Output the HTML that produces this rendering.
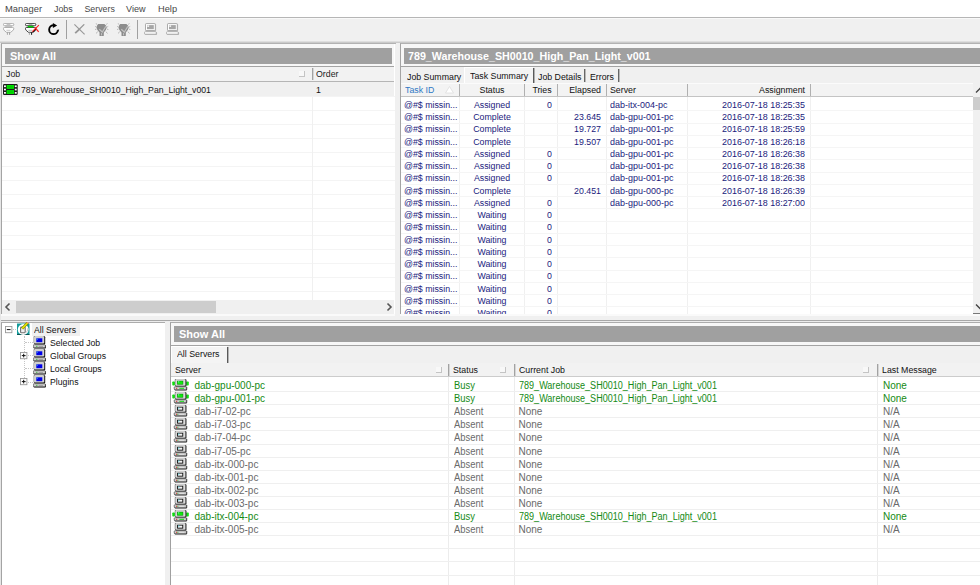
<!DOCTYPE html>
<html><head><meta charset="utf-8"><title>Backburner Queue Monitor</title>
<style>
html,body{margin:0;padding:0;}
body{width:980px;height:585px;overflow:hidden;background:#f0f0f0;font-family:"Liberation Sans",sans-serif;font-size:8.8px;color:#000;position:relative;}
.abs,.abs *{position:absolute;}
div,span{position:absolute;white-space:pre;}
.t{line-height:12px;height:12px;font-size:9.2px;transform:scaleX(0.957);transform-origin:0 0;}
.m{line-height:12px;height:12px;color:#474747;}
.bar{background:#a0a0a0;color:#fff;font-weight:bold;font-size:11px;}
.hl{background:#a3a3a3;height:1px;}
.vl{background:#a3a3a3;width:1px;}
.grid{background:#f0f0f0;}
.navy{color:#1a1a7c;}
.grn{color:#148a14;}
.gry{color:#6a6a6a;}
.seg{font-size:10px;line-height:13px;height:13px;}
</style></head><body>

<div style="left:0;top:0;width:980px;height:17px;background:#fff;"></div>
<div style="left:0;top:17px;width:980px;height:1px;background:#b6b6b6;"></div>
<div class="m" style="left:5px;top:2.8px;font-size:9.4px;">Manager</div>
<div class="m" style="left:54px;top:2.8px;font-size:8.9px;">Jobs</div>
<div class="m" style="left:84.5px;top:2.8px;font-size:8.8px;">Servers</div>
<div class="m" style="left:126px;top:2.8px;font-size:9.1px;">View</div>
<div class="m" style="left:158px;top:2.8px;font-size:9.25px;">Help</div>
<div style="left:0;top:18px;width:980px;height:23px;background:#f0f0f0;border-top:1px solid #f9f9f9;box-sizing:border-box;"></div>
<div style="left:0;top:41px;width:980px;height:1px;background:#dedede;"></div>
<div style="left:0;top:42px;width:980px;height:1px;background:#cacaca;"></div>
<svg style="position:absolute;left:3px;top:23px" width="16" height="13" viewBox="0 0 16 13"><rect x="0.4" y="0.4" width="10.4" height="2.3" rx="1.15" fill="#fff" stroke="#9c9c9c" stroke-width="0.8"/><path d="M3.6 1.55 H7.4" stroke="#bcbcbc" stroke-width="0.9"/><path d="M2.2 3.5 H9" stroke="#bcbcbc" stroke-width="0.9"/><path d="M0.4 5.6 Q0.4 4.5 1.6 4.5 L9.6 4.5 Q10.8 4.5 10.8 5.6 L10.8 6.1 Q10.2 7.6 7.7 9.3 L3.5 9.3 Q1 7.6 0.4 6.1 Z" fill="#fff" stroke="#9c9c9c" stroke-width="0.8"/><path d="M3.4 7.3 H7.4" stroke="#bcbcbc" stroke-width="0.8"/><path d="M4.4 9.3 V11.8" stroke="#9c9c9c" stroke-width="0.9"/><path d="M6.6 9.3 V11.8" stroke="#9c9c9c" stroke-width="1"/></svg>
<svg style="position:absolute;left:25px;top:23px" width="16" height="13" viewBox="0 0 16 13"><rect x="0.4" y="0.4" width="10.4" height="2.3" rx="1.15" fill="#fff" stroke="#111" stroke-width="0.8"/><path d="M3.6 1.55 H7.4" stroke="#aaa" stroke-width="0.9"/><path d="M2.2 3.5 H9" stroke="#aaa" stroke-width="0.9"/><path d="M0.4 5.6 Q0.4 4.5 1.6 4.5 L9.6 4.5 Q10.8 4.5 10.8 5.6 L10.8 6.1 Q10.2 7.6 7.7 9.3 L3.5 9.3 Q1 7.6 0.4 6.1 Z" fill="#fff" stroke="#111" stroke-width="0.8"/><path d="M3.4 7.3 H7.4" stroke="#aaa" stroke-width="0.8"/><path d="M4.4 9.3 V11.8" stroke="#999" stroke-width="0.9"/><path d="M6.6 9.3 V11.8" stroke="#111" stroke-width="1"/><rect x="2.8" y="2.9" width="5.6" height="1.5" fill="#00d800"/><path d="M10.8 5.8 Q10.2 7.6 7.7 9.3" fill="none" stroke="#111" stroke-width="1.2"/><path d="M13.9 2.2 L7.3 8.6" stroke="#ff1a1a" stroke-width="1.1"/><path d="M10 4.6 L13.7 8.8" stroke="#ff1a1a" stroke-width="1.25"/></svg>
<svg style="position:absolute;left:46.5px;top:22.7px" width="13" height="13" viewBox="0 0 13 13"><path d="M6.2 2.3 A4.4 4.4 0 1 0 10.9 7.4" fill="none" stroke="#000" stroke-width="1.9"/><path d="M5.9 0 L10.2 2.6 L5.9 4.9 Z" fill="#000"/><path d="M9.6 7.0 L12.2 6.4 L11.3 8.6 Z" fill="#000"/></svg>
<div style="left:66px;top:20px;width:1px;height:19px;background:#a0a0a0;"></div>
<svg style="position:absolute;left:74px;top:24.2px" width="11" height="11" viewBox="0 0 11 11"><path d="M0.4 0.4 L10.6 10.4" stroke="#979797" stroke-width="1.1"/><path d="M10.3 0.3 L5.5 5" stroke="#979797" stroke-width="1.2"/><path d="M5.8 4.8 L1.2 9.2" stroke="#979797" stroke-width="1.8"/></svg>
<svg style="position:absolute;left:95.2px;top:22.8px" width="14" height="13.5" viewBox="0 0 14 13.5"><path d="M3.2 1.1 L9.4 1.1 Q11.4 2.4 11.8 4.4 Q11.4 6.6 8.8 9.5 L8.8 12.6 Q8.8 13.1 8.2 13.1 L5.1 13.1 Q4.5 13.1 4.5 12.6 L4.5 9.5 Q1.8 6.6 1.4 4.4 Q1.8 2.4 3.2 1.1 Z" fill="#8c8c8c"/><path d="M4.3 6.3 L7.3 9 L10.9 3.2" fill="none" stroke="#c2c2c2" stroke-width="1.15"/><path d="M6.6 10.2 V12.4" stroke="#cfcfcf" stroke-width="0.9"/><path d="M0.7 0.2 L2.2 1.6 M12.6 0.2 L11.2 1.5 M0 6.5 L1.4 6.2 M13.4 6.5 L12 6.2 M1 10.4 L2.8 8.7 M12.6 10.4 L10.8 8.7 M13.2 3.4 L12.2 3.9 M0.2 3.4 L1.2 3.9" stroke="#a8a8a8" stroke-width="0.8"/></svg>
<svg style="position:absolute;left:117.1px;top:22.8px" width="14" height="13.5" viewBox="0 0 14 13.5"><path d="M3.2 1.1 L9.4 1.1 Q11.4 2.4 11.8 4.4 Q11.4 6.6 8.8 9.5 L8.8 12.6 Q8.8 13.1 8.2 13.1 L5.1 13.1 Q4.5 13.1 4.5 12.6 L4.5 9.5 Q1.8 6.6 1.4 4.4 Q1.8 2.4 3.2 1.1 Z" fill="#8c8c8c"/><path d="M4.3 6.3 L7.3 9 L10.9 3.2" fill="none" stroke="#c2c2c2" stroke-width="1.15"/><path d="M6.6 10.2 V12.4" stroke="#cfcfcf" stroke-width="0.9"/><path d="M0.7 0.2 L2.2 1.6 M12.6 0.2 L11.2 1.5 M0 6.5 L1.4 6.2 M13.4 6.5 L12 6.2 M1 10.4 L2.8 8.7 M12.6 10.4 L10.8 8.7 M13.2 3.4 L12.2 3.9 M0.2 3.4 L1.2 3.9" stroke="#a8a8a8" stroke-width="0.8"/></svg>
<div style="left:137px;top:20px;width:1px;height:19px;background:#a0a0a0;"></div>
<svg style="position:absolute;left:144.4px;top:22.7px" width="13.5" height="12.5" viewBox="0 0 13.5 12.5"><rect x="1.7" y="0.8" width="10.4" height="7.6" rx="0.8" fill="#b4b4b4"/><rect x="1.5" y="0.6" width="9.8" height="7" rx="0.7" fill="#fff" stroke="#a2a2a2" stroke-width="0.9"/><rect x="3" y="2.1" width="6.8" height="4.1" fill="#a6a6a6"/><rect x="3.3" y="2.4" width="1.8" height="1.4" fill="#fff"/><rect x="0.7" y="8.9" width="12.4" height="3" rx="1" fill="#b4b4b4"/><rect x="0.5" y="8.7" width="11.8" height="2.5" rx="0.9" fill="#fff" stroke="#a2a2a2" stroke-width="0.8"/></svg>
<svg style="position:absolute;left:166.3px;top:22.7px" width="13.5" height="12.5" viewBox="0 0 13.5 12.5"><rect x="1.7" y="0.8" width="10.4" height="7.6" rx="0.8" fill="#b4b4b4"/><rect x="1.5" y="0.6" width="9.8" height="7" rx="0.7" fill="#fff" stroke="#a2a2a2" stroke-width="0.9"/><rect x="3" y="2.1" width="6.8" height="4.1" fill="#a6a6a6"/><rect x="3.3" y="2.4" width="1.8" height="1.4" fill="#fff"/><rect x="0.7" y="8.9" width="12.4" height="3" rx="1" fill="#b4b4b4"/><rect x="0.5" y="8.7" width="11.8" height="2.5" rx="0.9" fill="#fff" stroke="#a2a2a2" stroke-width="0.8"/></svg>
<div style="left:1px;top:43px;width:395px;height:273px;background:#fff;border-left:1px solid #a4a4a4;border-top:1px solid #b2b2b2;box-sizing:border-box;"></div>
<div style="left:2px;top:44px;width:392px;height:22px;background:#f7f7f7;"></div>
<div class="bar" style="left:5px;top:48px;width:387px;height:16px;"></div>
<div style="left:10px;top:48.6px;font-size:11px;font-weight:bold;color:#fff;line-height:14px;">Show All</div>
<div class="hl" style="left:2px;top:66px;width:392px;"></div>
<div style="left:2px;top:67px;width:392px;height:14px;background:#f2f2f2;"></div>
<div class="hl" style="left:2px;top:81px;width:392px;background:#b5b5b5;"></div>
<div class="t" style="left:6px;top:68px;color:#222;">Job</div>
<div class="t" style="left:316.4px;top:68px;color:#222;">Order</div>
<div class="vl" style="left:312px;top:68px;height:12px;background:#a2a2a2;"></div><div class="vl" style="left:313px;top:68px;height:12px;background:#d6d6d6;"></div>
<div style="left:299px;top:71px;width:5px;height:5px;background:#f8f8f8;border-right:1px solid #c4c4c4;border-bottom:1px solid #c4c4c4;"></div>
<div style="left:2px;top:82px;width:392px;height:15px;background:#f0f0f0;"></div>
<div style="left:2px;top:96.3px;width:393px;height:1px;background:#f4f4f4;"></div>
<div style="left:2px;top:110.2px;width:393px;height:1px;background:#f4f4f4;"></div>
<div style="left:2px;top:124.1px;width:393px;height:1px;background:#f4f4f4;"></div>
<div style="left:2px;top:138.0px;width:393px;height:1px;background:#f4f4f4;"></div>
<div style="left:2px;top:151.9px;width:393px;height:1px;background:#f4f4f4;"></div>
<div style="left:2px;top:165.8px;width:393px;height:1px;background:#f4f4f4;"></div>
<div style="left:2px;top:179.7px;width:393px;height:1px;background:#f4f4f4;"></div>
<div style="left:2px;top:193.6px;width:393px;height:1px;background:#f4f4f4;"></div>
<div style="left:2px;top:207.5px;width:393px;height:1px;background:#f4f4f4;"></div>
<div style="left:2px;top:221.4px;width:393px;height:1px;background:#f4f4f4;"></div>
<div style="left:2px;top:235.3px;width:393px;height:1px;background:#f4f4f4;"></div>
<div style="left:2px;top:249.2px;width:393px;height:1px;background:#f4f4f4;"></div>
<div style="left:2px;top:263.1px;width:393px;height:1px;background:#f4f4f4;"></div>
<div style="left:2px;top:277.0px;width:393px;height:1px;background:#f4f4f4;"></div>
<div style="left:2px;top:290.9px;width:393px;height:1px;background:#f4f4f4;"></div>
<div style="left:312px;top:97px;width:1px;height:203px;background:#f0f0f0;"></div>
<div class="t" style="left:20.5px;top:83.5px;transform:scaleX(0.945);color:#111;">789_Warehouse_SH0010_High_Pan_Light_v001</div>
<div class="t" style="left:316px;top:83.5px;color:#111;">1</div>
<svg style="position:absolute;left:3.3px;top:83.9px" width="14.7" height="11" viewBox="0 0 14.7 11"><rect x="0" y="0" width="14.7" height="11" rx="1.2" fill="#1c1c1c"/><rect x="3.6" y="1" width="7.4" height="3.9" fill="#00e400"/><rect x="3.6" y="6.1" width="7.4" height="3.9" fill="#00e400"/><rect x="4.8" y="2.3" width="5" height="1.3" fill="#00c400"/><rect x="4.8" y="7.4" width="5" height="1.3" fill="#00c400"/><rect x="1.0" y="1.4" width="1.9" height="1.7" fill="#fff"/><rect x="1.0" y="4.7" width="1.9" height="1.7" fill="#fff"/><rect x="1.0" y="8.0" width="1.9" height="1.7" fill="#fff"/><rect x="11.8" y="1.4" width="1.9" height="1.7" fill="#fff"/><rect x="11.8" y="4.7" width="1.9" height="1.7" fill="#fff"/><rect x="11.8" y="8.0" width="1.9" height="1.7" fill="#fff"/></svg>
<div style="left:2px;top:300px;width:392px;height:14px;background:#f0f0f0;"></div>
<div style="left:16px;top:301px;width:200px;height:12px;background:#cdcdcd;"></div>
<svg style="position:absolute;left:4px;top:302px" width="8" height="10" viewBox="0 0 8 10"><path d="M5.5 1.5 L2 5 L5.5 8.5" fill="none" stroke="#555" stroke-width="1.6"/></svg>
<svg style="position:absolute;left:385px;top:302px" width="8" height="10" viewBox="0 0 8 10"><path d="M2.5 1.5 L6 5 L2.5 8.5" fill="none" stroke="#555" stroke-width="1.6"/></svg>
<div style="left:400px;top:43px;width:590px;height:273px;background:#fff;border-left:1px solid #a4a4a4;border-top:1px solid #b2b2b2;box-sizing:border-box;"></div>
<div style="left:401px;top:44px;width:579px;height:22px;background:#f7f7f7;"></div><div style="left:401px;top:67px;width:579px;height:16px;background:#f0f0f0;"></div>
<div class="bar" style="left:404px;top:48px;width:576px;height:16px;"></div>
<div style="left:408px;top:48.6px;font-size:10.7px;font-weight:bold;color:#fff;line-height:14px;">789_Warehouse_SH0010_High_Pan_Light_v001</div>
<div class="hl" style="left:401px;top:66px;width:579px;"></div>
<div style="left:464px;top:67px;width:69px;height:16px;background:#f4f4f4;border-left:1px solid #fff;border-top:1px solid #fff;box-sizing:border-box;"></div>
<div class="vl" style="left:533px;top:68px;height:15px;background:#5a5a5a;"></div><div class="vl" style="left:534px;top:68px;height:15px;background:#b0b0b0;"></div>
<div class="vl" style="left:584px;top:69px;height:13px;background:#666;"></div><div class="vl" style="left:585px;top:69px;height:13px;background:#b8b8b8;"></div>
<div class="vl" style="left:618px;top:69px;height:13px;background:#666;"></div><div class="vl" style="left:619px;top:69px;height:13px;background:#b8b8b8;"></div>
<div class="t" style="left:407px;top:71px;color:#111;">Job Summary</div>
<div class="t" style="left:470px;top:69.5px;color:#111;">Task Summary</div>
<div class="t" style="left:538px;top:71px;color:#111;">Job Details</div>
<div class="t" style="left:590px;top:71px;color:#111;">Errors</div>
<div style="left:401px;top:83px;width:572px;height:13px;background:#f3f3f3;border-top:1px solid #fbfbfb;box-sizing:border-box;"></div>
<div class="hl" style="left:401px;top:96px;width:572px;background:#c4c4c4;"></div>
<div class="vl" style="left:459px;top:84px;height:12px;background:#b0b0b0;"></div>
<div class="vl" style="left:459px;top:97px;height:217px;background:#f0f0f0;"></div>
<div class="vl" style="left:524px;top:84px;height:12px;background:#b0b0b0;"></div>
<div class="vl" style="left:524px;top:97px;height:217px;background:#f0f0f0;"></div>
<div class="vl" style="left:557px;top:84px;height:12px;background:#b0b0b0;"></div>
<div class="vl" style="left:557px;top:97px;height:217px;background:#f0f0f0;"></div>
<div class="vl" style="left:606px;top:84px;height:12px;background:#b0b0b0;"></div>
<div class="vl" style="left:606px;top:97px;height:217px;background:#f0f0f0;"></div>
<div class="vl" style="left:687px;top:84px;height:12px;background:#b0b0b0;"></div>
<div class="vl" style="left:687px;top:97px;height:217px;background:#f0f0f0;"></div>
<div class="vl" style="left:810px;top:84px;height:12px;background:#b0b0b0;"></div>
<div class="vl" style="left:810px;top:97px;height:217px;background:#f0f0f0;"></div>
<div class="t" style="left:405px;top:84px;color:#2f78c4;">Task ID</div>
<svg style="position:absolute;left:445px;top:86px" width="9" height="8" viewBox="0 0 9 8"><path d="M0.5 7 L4.5 0.5 L8.5 7 Z" fill="#fff" stroke="#ddd" stroke-width="0.8"/></svg>
<div class="t " style="left:441.5px;width:100px;text-align:center;transform-origin:50% 0;top:84px;color:#111;">Status</div>
<div class="t " style="left:491.5px;width:100px;text-align:center;transform-origin:50% 0;top:84px;color:#111;">Tries</div>
<div class="t " style="left:451px;width:150px;text-align:right;transform-origin:100% 0;top:84px;color:#111;">Elapsed</div>
<div class="t" style="left:610px;top:84px;color:#111;">Server</div>
<div class="t " style="left:655px;width:150px;text-align:right;transform-origin:100% 0;top:84px;color:#111;">Assignment</div>
<div style="left:401px;top:110.40px;width:572px;height:1px;background:#f5f5f5;"></div>
<div style="left:401px;top:122.65px;width:572px;height:1px;background:#f5f5f5;"></div>
<div style="left:401px;top:134.90px;width:572px;height:1px;background:#f5f5f5;"></div>
<div style="left:401px;top:147.15px;width:572px;height:1px;background:#f5f5f5;"></div>
<div style="left:401px;top:159.40px;width:572px;height:1px;background:#f5f5f5;"></div>
<div style="left:401px;top:171.65px;width:572px;height:1px;background:#f5f5f5;"></div>
<div style="left:401px;top:183.90px;width:572px;height:1px;background:#f5f5f5;"></div>
<div style="left:401px;top:196.15px;width:572px;height:1px;background:#f5f5f5;"></div>
<div style="left:401px;top:208.40px;width:572px;height:1px;background:#f5f5f5;"></div>
<div style="left:401px;top:220.65px;width:572px;height:1px;background:#f5f5f5;"></div>
<div style="left:401px;top:232.90px;width:572px;height:1px;background:#f5f5f5;"></div>
<div style="left:401px;top:245.15px;width:572px;height:1px;background:#f5f5f5;"></div>
<div style="left:401px;top:257.40px;width:572px;height:1px;background:#f5f5f5;"></div>
<div style="left:401px;top:269.65px;width:572px;height:1px;background:#f5f5f5;"></div>
<div style="left:401px;top:281.90px;width:572px;height:1px;background:#f5f5f5;"></div>
<div style="left:401px;top:294.15px;width:572px;height:1px;background:#f5f5f5;"></div>
<div style="left:401px;top:306.40px;width:572px;height:1px;background:#f5f5f5;"></div>
<div style="left:401px;top:318.65px;width:572px;height:1px;background:#f5f5f5;"></div>
<div class="t navy" style="left:403.5px;top:98.85px;">@#$ missin...</div>
<div class="t navy" style="left:441.5px;width:100px;text-align:center;transform-origin:50% 0;top:98.85px;">Assigned</div>
<div class="t navy" style="left:402px;width:150px;text-align:right;transform-origin:100% 0;top:98.85px;">0</div>
<div class="t navy" style="left:610.3px;top:98.85px;transform:scaleX(0.978);">dab-itx-004-pc</div>
<div class="t navy" style="left:655px;width:150px;text-align:right;transform-origin:100% 0;top:98.85px;transform:scaleX(0.973);">2016-07-18 18:25:35</div>
<div class="t navy" style="left:403.5px;top:111.1px;">@#$ missin...</div>
<div class="t navy" style="left:441.5px;width:100px;text-align:center;transform-origin:50% 0;top:111.1px;">Complete</div>
<div class="t navy" style="left:451px;width:150px;text-align:right;transform-origin:100% 0;top:111.1px;">23.645</div>
<div class="t navy" style="left:610.3px;top:111.1px;transform:scaleX(0.978);">dab-gpu-001-pc</div>
<div class="t navy" style="left:655px;width:150px;text-align:right;transform-origin:100% 0;top:111.1px;transform:scaleX(0.973);">2016-07-18 18:25:35</div>
<div class="t navy" style="left:403.5px;top:123.35px;">@#$ missin...</div>
<div class="t navy" style="left:441.5px;width:100px;text-align:center;transform-origin:50% 0;top:123.35px;">Complete</div>
<div class="t navy" style="left:451px;width:150px;text-align:right;transform-origin:100% 0;top:123.35px;">19.727</div>
<div class="t navy" style="left:610.3px;top:123.35px;transform:scaleX(0.978);">dab-gpu-001-pc</div>
<div class="t navy" style="left:655px;width:150px;text-align:right;transform-origin:100% 0;top:123.35px;transform:scaleX(0.973);">2016-07-18 18:25:59</div>
<div class="t navy" style="left:403.5px;top:135.6px;">@#$ missin...</div>
<div class="t navy" style="left:441.5px;width:100px;text-align:center;transform-origin:50% 0;top:135.6px;">Complete</div>
<div class="t navy" style="left:451px;width:150px;text-align:right;transform-origin:100% 0;top:135.6px;">19.507</div>
<div class="t navy" style="left:610.3px;top:135.6px;transform:scaleX(0.978);">dab-gpu-001-pc</div>
<div class="t navy" style="left:655px;width:150px;text-align:right;transform-origin:100% 0;top:135.6px;transform:scaleX(0.973);">2016-07-18 18:26:18</div>
<div class="t navy" style="left:403.5px;top:147.85px;">@#$ missin...</div>
<div class="t navy" style="left:441.5px;width:100px;text-align:center;transform-origin:50% 0;top:147.85px;">Assigned</div>
<div class="t navy" style="left:402px;width:150px;text-align:right;transform-origin:100% 0;top:147.85px;">0</div>
<div class="t navy" style="left:610.3px;top:147.85px;transform:scaleX(0.978);">dab-gpu-001-pc</div>
<div class="t navy" style="left:655px;width:150px;text-align:right;transform-origin:100% 0;top:147.85px;transform:scaleX(0.973);">2016-07-18 18:26:38</div>
<div class="t navy" style="left:403.5px;top:160.1px;">@#$ missin...</div>
<div class="t navy" style="left:441.5px;width:100px;text-align:center;transform-origin:50% 0;top:160.1px;">Assigned</div>
<div class="t navy" style="left:402px;width:150px;text-align:right;transform-origin:100% 0;top:160.1px;">0</div>
<div class="t navy" style="left:610.3px;top:160.1px;transform:scaleX(0.978);">dab-gpu-001-pc</div>
<div class="t navy" style="left:655px;width:150px;text-align:right;transform-origin:100% 0;top:160.1px;transform:scaleX(0.973);">2016-07-18 18:26:38</div>
<div class="t navy" style="left:403.5px;top:172.35px;">@#$ missin...</div>
<div class="t navy" style="left:441.5px;width:100px;text-align:center;transform-origin:50% 0;top:172.35px;">Assigned</div>
<div class="t navy" style="left:402px;width:150px;text-align:right;transform-origin:100% 0;top:172.35px;">0</div>
<div class="t navy" style="left:610.3px;top:172.35px;transform:scaleX(0.978);">dab-gpu-001-pc</div>
<div class="t navy" style="left:655px;width:150px;text-align:right;transform-origin:100% 0;top:172.35px;transform:scaleX(0.973);">2016-07-18 18:26:38</div>
<div class="t navy" style="left:403.5px;top:184.6px;">@#$ missin...</div>
<div class="t navy" style="left:441.5px;width:100px;text-align:center;transform-origin:50% 0;top:184.6px;">Complete</div>
<div class="t navy" style="left:451px;width:150px;text-align:right;transform-origin:100% 0;top:184.6px;">20.451</div>
<div class="t navy" style="left:610.3px;top:184.6px;transform:scaleX(0.978);">dab-gpu-000-pc</div>
<div class="t navy" style="left:655px;width:150px;text-align:right;transform-origin:100% 0;top:184.6px;transform:scaleX(0.973);">2016-07-18 18:26:39</div>
<div class="t navy" style="left:403.5px;top:196.85px;">@#$ missin...</div>
<div class="t navy" style="left:441.5px;width:100px;text-align:center;transform-origin:50% 0;top:196.85px;">Assigned</div>
<div class="t navy" style="left:402px;width:150px;text-align:right;transform-origin:100% 0;top:196.85px;">0</div>
<div class="t navy" style="left:610.3px;top:196.85px;transform:scaleX(0.978);">dab-gpu-000-pc</div>
<div class="t navy" style="left:655px;width:150px;text-align:right;transform-origin:100% 0;top:196.85px;transform:scaleX(0.973);">2016-07-18 18:27:00</div>
<div class="t navy" style="left:403.5px;top:209.1px;">@#$ missin...</div>
<div class="t navy" style="left:441.5px;width:100px;text-align:center;transform-origin:50% 0;top:209.1px;">Waiting</div>
<div class="t navy" style="left:402px;width:150px;text-align:right;transform-origin:100% 0;top:209.1px;">0</div>
<div class="t navy" style="left:403.5px;top:221.35px;">@#$ missin...</div>
<div class="t navy" style="left:441.5px;width:100px;text-align:center;transform-origin:50% 0;top:221.35px;">Waiting</div>
<div class="t navy" style="left:402px;width:150px;text-align:right;transform-origin:100% 0;top:221.35px;">0</div>
<div class="t navy" style="left:403.5px;top:233.6px;">@#$ missin...</div>
<div class="t navy" style="left:441.5px;width:100px;text-align:center;transform-origin:50% 0;top:233.6px;">Waiting</div>
<div class="t navy" style="left:402px;width:150px;text-align:right;transform-origin:100% 0;top:233.6px;">0</div>
<div class="t navy" style="left:403.5px;top:245.85px;">@#$ missin...</div>
<div class="t navy" style="left:441.5px;width:100px;text-align:center;transform-origin:50% 0;top:245.85px;">Waiting</div>
<div class="t navy" style="left:402px;width:150px;text-align:right;transform-origin:100% 0;top:245.85px;">0</div>
<div class="t navy" style="left:403.5px;top:258.1px;">@#$ missin...</div>
<div class="t navy" style="left:441.5px;width:100px;text-align:center;transform-origin:50% 0;top:258.1px;">Waiting</div>
<div class="t navy" style="left:402px;width:150px;text-align:right;transform-origin:100% 0;top:258.1px;">0</div>
<div class="t navy" style="left:403.5px;top:270.35px;">@#$ missin...</div>
<div class="t navy" style="left:441.5px;width:100px;text-align:center;transform-origin:50% 0;top:270.35px;">Waiting</div>
<div class="t navy" style="left:402px;width:150px;text-align:right;transform-origin:100% 0;top:270.35px;">0</div>
<div class="t navy" style="left:403.5px;top:282.6px;">@#$ missin...</div>
<div class="t navy" style="left:441.5px;width:100px;text-align:center;transform-origin:50% 0;top:282.6px;">Waiting</div>
<div class="t navy" style="left:402px;width:150px;text-align:right;transform-origin:100% 0;top:282.6px;">0</div>
<div class="t navy" style="left:403.5px;top:294.85px;">@#$ missin...</div>
<div class="t navy" style="left:441.5px;width:100px;text-align:center;transform-origin:50% 0;top:294.85px;">Waiting</div>
<div class="t navy" style="left:402px;width:150px;text-align:right;transform-origin:100% 0;top:294.85px;">0</div>
<div class="t navy" style="left:403.5px;top:307.1px;">@#$ missin...</div>
<div class="t navy" style="left:441.5px;width:100px;text-align:center;transform-origin:50% 0;top:307.1px;">Waiting</div>
<div class="t navy" style="left:402px;width:150px;text-align:right;transform-origin:100% 0;top:307.1px;">0</div>
<div style="left:400px;top:314px;width:580px;height:2px;background:#fafafa;"></div>
<div style="left:400px;top:316px;width:580px;height:4px;background:#f0f0f0;"></div>
<div style="left:0px;top:314px;width:395px;height:2px;background:#fafafa;"></div>
<div style="left:0px;top:316px;width:400px;height:4px;background:#f0f0f0;"></div>
<div style="left:395px;top:44px;width:5px;height:276px;background:#f0f0f0;"></div>
<div style="left:0px;top:320px;width:980px;height:1px;background:#a8a8a8;"></div><div style="left:0px;top:321px;width:980px;height:1px;background:#ededed;"></div>
<div style="left:0px;top:44px;width:1px;height:541px;background:#e6e6e6;"></div>
<div style="left:973px;top:83px;width:7px;height:231px;background:#f0f0f0;"></div>
<div style="left:973px;top:97px;width:7px;height:13px;background:#cdcdcd;"></div>
<svg style="position:absolute;left:974.5px;top:86px" width="7" height="8" viewBox="0 0 7 8"><path d="M1 6.5 L5 2.5 L9 6.5" fill="none" stroke="#444" stroke-width="1.4"/></svg>
<svg style="position:absolute;left:974.5px;top:303px" width="7" height="8" viewBox="0 0 7 8"><path d="M1 1.5 L5 5.5 L9 1.5" fill="none" stroke="#444" stroke-width="1.4"/></svg>
<div style="left:973px;top:313px;width:7px;height:1px;background:#777;"></div>
<div style="left:1px;top:322px;width:164px;height:270px;background:#fff;border-left:1px solid #a4a4a4;border-top:1px solid #acacac;box-sizing:border-box;"></div>
<div style="left:32px;top:323px;width:48px;height:13px;background:#f0f0f0;"></div>
<div class="t" style="left:34px;top:323.5px;color:#111;transform:scaleX(0.945);">All Servers</div>
<div class="t" style="left:49.5px;top:336.50px;color:#111;transform:scaleX(0.945);">Selected Job</div>
<div class="t" style="left:49.5px;top:349.57px;color:#111;transform:scaleX(0.945);">Global Groups</div>
<div class="t" style="left:49.5px;top:362.64px;color:#111;transform:scaleX(0.945);">Local Groups</div>
<div class="t" style="left:49.5px;top:375.71px;color:#111;transform:scaleX(0.945);">Plugins</div>
<div style="left:12.5px;top:329px;width:5px;height:0;border-top:1px dotted #c6c6c6;"></div>
<div style="left:23.6px;top:336px;width:0;height:46px;border-left:1px dotted #c6c6c6;"></div>
<div style="left:24.5px;top:342.30px;width:8.5px;height:0;border-top:1px dotted #c6c6c6;"></div>
<div style="left:28px;top:355.37px;width:5px;height:0;border-top:1px dotted #c6c6c6;"></div>
<div style="left:24.5px;top:368.44px;width:8.5px;height:0;border-top:1px dotted #c6c6c6;"></div>
<div style="left:28px;top:381.51px;width:5px;height:0;border-top:1px dotted #c6c6c6;"></div>
<svg style="position:absolute;left:5px;top:326px" width="7.5" height="7.5" viewBox="0 0 7.5 7.5"><rect x="0.5" y="0.5" width="6.4" height="6.2" fill="#fff" stroke="#999" stroke-width="0.9"/><path d="M1.8 3.6 H5.6" stroke="#111" stroke-width="1"/></svg>
<svg style="position:absolute;left:20.2px;top:352.1px" width="7.5" height="7.5" viewBox="0 0 7.5 7.5"><rect x="0.5" y="0.5" width="6.4" height="6.2" fill="#fff" stroke="#999" stroke-width="0.9"/><path d="M1.8 3.6 H5.6" stroke="#111" stroke-width="1"/><path d="M3.7 1.8 V5.4" stroke="#111" stroke-width="1"/></svg>
<svg style="position:absolute;left:20.2px;top:378.24px" width="7.5" height="7.5" viewBox="0 0 7.5 7.5"><rect x="0.5" y="0.5" width="6.4" height="6.2" fill="#fff" stroke="#999" stroke-width="0.9"/><path d="M1.8 3.6 H5.6" stroke="#111" stroke-width="1"/><path d="M3.7 1.8 V5.4" stroke="#111" stroke-width="1"/></svg>
<svg style="position:absolute;left:17.2px;top:321.5px" width="12.5" height="13.5" viewBox="0 -1.5 12.5 13.5"><rect x="0" y="0" width="12.5" height="11.6" fill="#149c9c"/><rect x="0" y="10.8" width="12.5" height="0.9" fill="#063838"/><circle cx="6.2" cy="6" r="5.4" fill="#fff"/><rect x="3.6" y="3.6" width="4.6" height="5.6" rx="0.8" fill="#f0f0f0" stroke="#707070" stroke-width="1.1"/><path d="M8.6 9.4 Q11 8 11 4.5" fill="none" stroke="#c8c8c8" stroke-width="1"/><path d="M5.2 5.2 L10.8 -0.8" stroke="#6a6a00" stroke-width="2.6"/><path d="M5.2 5.2 L10.8 -0.8" stroke="#e0e000" stroke-width="1.8"/><path d="M10.2 -0.4 L11.2 -1.2" stroke="#e88" stroke-width="1.6"/></svg>
<svg style="position:absolute;left:32.7px;top:336.0px" width="14" height="13" viewBox="0 0 14 13"><rect x="1.2" y="0.2" width="11" height="8.3" rx="1" fill="#111"/><rect x="1" y="0" width="10.2" height="7.6" rx="0.9" fill="#d0d0d0" stroke="#3a3a3a" stroke-width="0.6"/><rect x="1.6" y="0.5" width="9" height="6.5" rx="0.6" fill="#cfcfcf" stroke="#eee" stroke-width="0.4"/><rect x="3.3" y="2.3" width="6" height="3.9" fill="#0000ea"/><rect x="3.8" y="2.7" width="1" height="1" fill="#38c8e8"/><path d="M0.6 9.6 Q0.6 8.9 1.6 8.9 L12 8.9 Q13 8.9 13 9.6 L13 11.6 Q13 12.6 12 12.6 L1.6 12.6 Q0.6 12.6 0.6 11.6 Z" fill="#111"/><path d="M0.2 9.4 Q0.2 8.7 1.2 8.7 L11.4 8.7 Q12.4 8.7 12.4 9.4 L12.4 11 Q12.4 11.8 11.4 11.8 L1.2 11.8 Q0.2 11.8 0.2 11 Z" fill="#d0d0d0" stroke="#3a3a3a" stroke-width="0.6"/><rect x="3.4" y="9.8" width="0.9" height="1.2" fill="#20b020"/><rect x="5.6" y="10" width="4.4" height="0.8" fill="#9a9a9a"/></svg>
<svg style="position:absolute;left:32.7px;top:349.07px" width="14" height="13" viewBox="0 0 14 13"><rect x="1.2" y="0.2" width="11" height="8.3" rx="1" fill="#111"/><rect x="1" y="0" width="10.2" height="7.6" rx="0.9" fill="#d0d0d0" stroke="#3a3a3a" stroke-width="0.6"/><rect x="1.6" y="0.5" width="9" height="6.5" rx="0.6" fill="#cfcfcf" stroke="#eee" stroke-width="0.4"/><rect x="3.3" y="2.3" width="6" height="3.9" fill="#0000ea"/><rect x="3.8" y="2.7" width="1" height="1" fill="#38c8e8"/><path d="M0.6 9.6 Q0.6 8.9 1.6 8.9 L12 8.9 Q13 8.9 13 9.6 L13 11.6 Q13 12.6 12 12.6 L1.6 12.6 Q0.6 12.6 0.6 11.6 Z" fill="#111"/><path d="M0.2 9.4 Q0.2 8.7 1.2 8.7 L11.4 8.7 Q12.4 8.7 12.4 9.4 L12.4 11 Q12.4 11.8 11.4 11.8 L1.2 11.8 Q0.2 11.8 0.2 11 Z" fill="#d0d0d0" stroke="#3a3a3a" stroke-width="0.6"/><rect x="3.4" y="9.8" width="0.9" height="1.2" fill="#20b020"/><rect x="5.6" y="10" width="4.4" height="0.8" fill="#9a9a9a"/></svg>
<svg style="position:absolute;left:32.7px;top:362.14px" width="14" height="13" viewBox="0 0 14 13"><rect x="1.2" y="0.2" width="11" height="8.3" rx="1" fill="#111"/><rect x="1" y="0" width="10.2" height="7.6" rx="0.9" fill="#d0d0d0" stroke="#3a3a3a" stroke-width="0.6"/><rect x="1.6" y="0.5" width="9" height="6.5" rx="0.6" fill="#cfcfcf" stroke="#eee" stroke-width="0.4"/><rect x="3.3" y="2.3" width="6" height="3.9" fill="#0000ea"/><rect x="3.8" y="2.7" width="1" height="1" fill="#38c8e8"/><path d="M0.6 9.6 Q0.6 8.9 1.6 8.9 L12 8.9 Q13 8.9 13 9.6 L13 11.6 Q13 12.6 12 12.6 L1.6 12.6 Q0.6 12.6 0.6 11.6 Z" fill="#111"/><path d="M0.2 9.4 Q0.2 8.7 1.2 8.7 L11.4 8.7 Q12.4 8.7 12.4 9.4 L12.4 11 Q12.4 11.8 11.4 11.8 L1.2 11.8 Q0.2 11.8 0.2 11 Z" fill="#d0d0d0" stroke="#3a3a3a" stroke-width="0.6"/><rect x="3.4" y="9.8" width="0.9" height="1.2" fill="#20b020"/><rect x="5.6" y="10" width="4.4" height="0.8" fill="#9a9a9a"/></svg>
<svg style="position:absolute;left:32.7px;top:375.21px" width="14" height="13" viewBox="0 0 14 13"><rect x="1.2" y="0.2" width="11" height="8.3" rx="1" fill="#111"/><rect x="1" y="0" width="10.2" height="7.6" rx="0.9" fill="#d0d0d0" stroke="#3a3a3a" stroke-width="0.6"/><rect x="1.6" y="0.5" width="9" height="6.5" rx="0.6" fill="#cfcfcf" stroke="#eee" stroke-width="0.4"/><rect x="3.3" y="2.3" width="6" height="3.9" fill="#0000ea"/><rect x="3.8" y="2.7" width="1" height="1" fill="#38c8e8"/><path d="M0.6 9.6 Q0.6 8.9 1.6 8.9 L12 8.9 Q13 8.9 13 9.6 L13 11.6 Q13 12.6 12 12.6 L1.6 12.6 Q0.6 12.6 0.6 11.6 Z" fill="#111"/><path d="M0.2 9.4 Q0.2 8.7 1.2 8.7 L11.4 8.7 Q12.4 8.7 12.4 9.4 L12.4 11 Q12.4 11.8 11.4 11.8 L1.2 11.8 Q0.2 11.8 0.2 11 Z" fill="#d0d0d0" stroke="#3a3a3a" stroke-width="0.6"/><rect x="3.4" y="9.8" width="0.9" height="1.2" fill="#20b020"/><rect x="5.6" y="10" width="4.4" height="0.8" fill="#9a9a9a"/></svg>
<div style="left:170px;top:322px;width:820px;height:270px;background:#fff;border-left:1px solid #a0a0a0;border-top:1px solid #acacac;box-sizing:border-box;"></div>
<div style="left:171px;top:323px;width:809px;height:22px;background:#f7f7f7;"></div><div style="left:171px;top:346px;width:809px;height:17px;background:#f0f0f0;"></div>
<div class="bar" style="left:174px;top:326px;width:806px;height:16px;"></div>
<div style="left:179px;top:327px;font-size:11px;font-weight:bold;color:#fff;line-height:14px;">Show All</div>
<div class="hl" style="left:171px;top:345px;width:809px;"></div>
<div style="left:171px;top:346px;width:56px;height:17px;background:#f4f4f4;border-left:1px solid #fff;border-top:1px solid #fff;box-sizing:border-box;"></div>
<div class="vl" style="left:227px;top:347px;height:16px;background:#5a5a5a;"></div><div class="vl" style="left:228px;top:347px;height:16px;background:#b4b4b4;"></div>
<div class="t" style="left:177px;top:348px;color:#111;">All Servers</div>
<div style="left:171px;top:363px;width:809px;height:13px;background:#f2f2f2;"></div>
<div class="hl" style="left:171px;top:376px;width:809px;background:#cccccc;"></div>
<div class="vl" style="left:448px;top:364px;height:12px;background:#a2a2a2;"></div><div class="vl" style="left:449px;top:364px;height:12px;background:#d6d6d6;"></div>
<div class="vl" style="left:448px;top:377px;height:210px;background:#ececec;"></div>
<div class="vl" style="left:514px;top:364px;height:12px;background:#a2a2a2;"></div><div class="vl" style="left:515px;top:364px;height:12px;background:#d6d6d6;"></div>
<div class="vl" style="left:514px;top:377px;height:210px;background:#ececec;"></div>
<div class="vl" style="left:877px;top:364px;height:12px;background:#a2a2a2;"></div><div class="vl" style="left:878px;top:364px;height:12px;background:#d6d6d6;"></div>
<div class="vl" style="left:877px;top:377px;height:210px;background:#ececec;"></div>
<div style="left:436px;top:367px;width:5px;height:5px;background:#f8f8f8;border-right:1px solid #c4c4c4;border-bottom:1px solid #c4c4c4;"></div>
<div style="left:500px;top:367px;width:5px;height:5px;background:#f8f8f8;border-right:1px solid #c4c4c4;border-bottom:1px solid #c4c4c4;"></div>
<div style="left:863px;top:367px;width:5px;height:5px;background:#f8f8f8;border-right:1px solid #c4c4c4;border-bottom:1px solid #c4c4c4;"></div>
<div class="t" style="left:175px;top:364px;color:#111;">Server</div>
<div class="t" style="left:453px;top:364px;color:#111;">Status</div>
<div class="t" style="left:518.5px;top:364px;color:#111;">Current Job</div>
<div class="t" style="left:882px;top:364px;color:#111;">Last Message</div>
<div style="left:171px;top:391.10px;width:809px;height:1px;background:#efefef;"></div>
<div style="left:171px;top:404.20px;width:809px;height:1px;background:#efefef;"></div>
<div style="left:171px;top:417.30px;width:809px;height:1px;background:#efefef;"></div>
<div style="left:171px;top:430.40px;width:809px;height:1px;background:#efefef;"></div>
<div style="left:171px;top:443.50px;width:809px;height:1px;background:#efefef;"></div>
<div style="left:171px;top:456.60px;width:809px;height:1px;background:#efefef;"></div>
<div style="left:171px;top:469.70px;width:809px;height:1px;background:#efefef;"></div>
<div style="left:171px;top:482.80px;width:809px;height:1px;background:#efefef;"></div>
<div style="left:171px;top:495.90px;width:809px;height:1px;background:#efefef;"></div>
<div style="left:171px;top:509.00px;width:809px;height:1px;background:#efefef;"></div>
<div style="left:171px;top:522.10px;width:809px;height:1px;background:#efefef;"></div>
<div style="left:171px;top:535.20px;width:809px;height:1px;background:#efefef;"></div>
<div style="left:171px;top:548.30px;width:809px;height:1px;background:#efefef;"></div>
<div style="left:171px;top:561.40px;width:809px;height:1px;background:#efefef;"></div>
<div style="left:171px;top:574.50px;width:809px;height:1px;background:#efefef;"></div>
<div style="left:171px;top:587.60px;width:809px;height:1px;background:#efefef;"></div>
<div class="seg grn" style="left:194.5px;top:379.2px;">dab-gpu-000-pc</div>
<div class="seg grn" style="left:453.5px;top:379.2px;transform:scaleX(0.94);transform-origin:0 0;">Busy</div>
<div class="seg grn" style="left:518.5px;top:379.2px;transform:scaleX(0.905);transform-origin:0 0;">789_Warehouse_SH0010_High_Pan_Light_v001</div>
<div class="seg grn" style="left:883px;top:379.2px;">None</div>
<div class="seg grn" style="left:194.5px;top:392.27px;">dab-gpu-001-pc</div>
<div class="seg grn" style="left:453.5px;top:392.27px;transform:scaleX(0.94);transform-origin:0 0;">Busy</div>
<div class="seg grn" style="left:518.5px;top:392.27px;transform:scaleX(0.905);transform-origin:0 0;">789_Warehouse_SH0010_High_Pan_Light_v001</div>
<div class="seg grn" style="left:883px;top:392.27px;">None</div>
<div class="seg gry" style="left:194.5px;top:405.34px;">dab-i7-02-pc</div>
<div class="seg gry" style="left:453.5px;top:405.34px;transform:scaleX(0.94);transform-origin:0 0;">Absent</div>
<div class="seg gry" style="left:518.5px;top:405.34px;">None</div>
<div class="seg gry" style="left:883px;top:405.34px;">N/A</div>
<div class="seg gry" style="left:194.5px;top:418.41px;">dab-i7-03-pc</div>
<div class="seg gry" style="left:453.5px;top:418.41px;transform:scaleX(0.94);transform-origin:0 0;">Absent</div>
<div class="seg gry" style="left:518.5px;top:418.41px;">None</div>
<div class="seg gry" style="left:883px;top:418.41px;">N/A</div>
<div class="seg gry" style="left:194.5px;top:431.48px;">dab-i7-04-pc</div>
<div class="seg gry" style="left:453.5px;top:431.48px;transform:scaleX(0.94);transform-origin:0 0;">Absent</div>
<div class="seg gry" style="left:518.5px;top:431.48px;">None</div>
<div class="seg gry" style="left:883px;top:431.48px;">N/A</div>
<div class="seg gry" style="left:194.5px;top:444.55px;">dab-i7-05-pc</div>
<div class="seg gry" style="left:453.5px;top:444.55px;transform:scaleX(0.94);transform-origin:0 0;">Absent</div>
<div class="seg gry" style="left:518.5px;top:444.55px;">None</div>
<div class="seg gry" style="left:883px;top:444.55px;">N/A</div>
<div class="seg gry" style="left:194.5px;top:457.62px;">dab-itx-000-pc</div>
<div class="seg gry" style="left:453.5px;top:457.62px;transform:scaleX(0.94);transform-origin:0 0;">Absent</div>
<div class="seg gry" style="left:518.5px;top:457.62px;">None</div>
<div class="seg gry" style="left:883px;top:457.62px;">N/A</div>
<div class="seg gry" style="left:194.5px;top:470.69px;">dab-itx-001-pc</div>
<div class="seg gry" style="left:453.5px;top:470.69px;transform:scaleX(0.94);transform-origin:0 0;">Absent</div>
<div class="seg gry" style="left:518.5px;top:470.69px;">None</div>
<div class="seg gry" style="left:883px;top:470.69px;">N/A</div>
<div class="seg gry" style="left:194.5px;top:483.76px;">dab-itx-002-pc</div>
<div class="seg gry" style="left:453.5px;top:483.76px;transform:scaleX(0.94);transform-origin:0 0;">Absent</div>
<div class="seg gry" style="left:518.5px;top:483.76px;">None</div>
<div class="seg gry" style="left:883px;top:483.76px;">N/A</div>
<div class="seg gry" style="left:194.5px;top:496.83px;">dab-itx-003-pc</div>
<div class="seg gry" style="left:453.5px;top:496.83px;transform:scaleX(0.94);transform-origin:0 0;">Absent</div>
<div class="seg gry" style="left:518.5px;top:496.83px;">None</div>
<div class="seg gry" style="left:883px;top:496.83px;">N/A</div>
<div class="seg grn" style="left:194.5px;top:509.9px;">dab-itx-004-pc</div>
<div class="seg grn" style="left:453.5px;top:509.9px;transform:scaleX(0.94);transform-origin:0 0;">Busy</div>
<div class="seg grn" style="left:518.5px;top:509.9px;transform:scaleX(0.905);transform-origin:0 0;">789_Warehouse_SH0010_High_Pan_Light_v001</div>
<div class="seg grn" style="left:883px;top:509.9px;">None</div>
<div class="seg gry" style="left:194.5px;top:522.97px;">dab-itx-005-pc</div>
<div class="seg gry" style="left:453.5px;top:522.97px;transform:scaleX(0.94);transform-origin:0 0;">Absent</div>
<div class="seg gry" style="left:518.5px;top:522.97px;">None</div>
<div class="seg gry" style="left:883px;top:522.97px;">N/A</div>
<svg style="position:absolute;left:172px;top:379.2px" width="17" height="12" viewBox="0 0 17 12"><rect x="0.3" y="2.4" width="2.6" height="4.2" rx="0.8" fill="#10e010"/><rect x="14.1" y="2.4" width="2.7" height="4.2" rx="0.8" fill="#10e010"/><rect x="3.3" y="0.2" width="11.2" height="7.5" rx="0.9" fill="#2a2a2a"/><rect x="3.2" y="0.1" width="10.3" height="6.6" rx="0.8" fill="#c8c8c8" stroke="#4a4a4a" stroke-width="0.6"/><rect x="3.8" y="0.6" width="9" height="5.6" rx="0.5" fill="#d6d6d6" stroke="#f2f2f2" stroke-width="0.4"/><rect x="5.1" y="1.8" width="6.1" height="3.8" fill="#0a8a0a"/><rect x="5.6" y="2.3" width="5.1" height="2.8" fill="#10e810"/><rect x="6" y="2.5" width="1.2" height="0.8" fill="#9fe"/><path d="M2.4 8.6 Q2.4 7.9 3.2 7.9 L14.4 7.9 Q15.2 7.9 15.2 8.6 L15.2 10.6 Q15.2 11.4 14.4 11.4 L3.2 11.4 Q2.4 11.4 2.4 10.6 Z" fill="#2a2a2a"/><path d="M2.2 8.4 Q2.2 7.7 3 7.7 L13.6 7.7 Q14.4 7.7 14.4 8.4 L14.4 10 Q14.4 10.7 13.6 10.7 L3 10.7 Q2.2 10.7 2.2 10 Z" fill="#cfcfcf" stroke="#4a4a4a" stroke-width="0.6"/><rect x="4" y="8.8" width="1.2" height="1" fill="#e03030"/><rect x="7.4" y="8.8" width="4.6" height="1" fill="#10e010"/></svg>
<svg style="position:absolute;left:172px;top:392.27px" width="17" height="12" viewBox="0 0 17 12"><rect x="0.3" y="2.4" width="2.6" height="4.2" rx="0.8" fill="#10e010"/><rect x="14.1" y="2.4" width="2.7" height="4.2" rx="0.8" fill="#10e010"/><rect x="3.3" y="0.2" width="11.2" height="7.5" rx="0.9" fill="#2a2a2a"/><rect x="3.2" y="0.1" width="10.3" height="6.6" rx="0.8" fill="#c8c8c8" stroke="#4a4a4a" stroke-width="0.6"/><rect x="3.8" y="0.6" width="9" height="5.6" rx="0.5" fill="#d6d6d6" stroke="#f2f2f2" stroke-width="0.4"/><rect x="5.1" y="1.8" width="6.1" height="3.8" fill="#0a8a0a"/><rect x="5.6" y="2.3" width="5.1" height="2.8" fill="#10e810"/><rect x="6" y="2.5" width="1.2" height="0.8" fill="#9fe"/><path d="M2.4 8.6 Q2.4 7.9 3.2 7.9 L14.4 7.9 Q15.2 7.9 15.2 8.6 L15.2 10.6 Q15.2 11.4 14.4 11.4 L3.2 11.4 Q2.4 11.4 2.4 10.6 Z" fill="#2a2a2a"/><path d="M2.2 8.4 Q2.2 7.7 3 7.7 L13.6 7.7 Q14.4 7.7 14.4 8.4 L14.4 10 Q14.4 10.7 13.6 10.7 L3 10.7 Q2.2 10.7 2.2 10 Z" fill="#cfcfcf" stroke="#4a4a4a" stroke-width="0.6"/><rect x="4" y="8.8" width="1.2" height="1" fill="#e03030"/><rect x="7.4" y="8.8" width="4.6" height="1" fill="#10e010"/></svg>
<svg style="position:absolute;left:172px;top:405.34px" width="17" height="12" viewBox="0 0 17 12"><rect x="3.3" y="0.2" width="11.2" height="7.5" rx="0.9" fill="#2a2a2a"/><rect x="3.2" y="0.1" width="10.3" height="6.6" rx="0.8" fill="#c8c8c8" stroke="#4a4a4a" stroke-width="0.6"/><rect x="3.8" y="0.6" width="9" height="5.6" rx="0.5" fill="#d6d6d6" stroke="#f2f2f2" stroke-width="0.4"/><rect x="5.1" y="1.8" width="6.1" height="3.8" fill="#111"/><rect x="6" y="2.6" width="4.3" height="2.1" fill="#f4f4f4"/><rect x="6" y="2.6" width="1.4" height="0.9" fill="#4cd8e8"/><path d="M2.4 8.6 Q2.4 7.9 3.2 7.9 L14.4 7.9 Q15.2 7.9 15.2 8.6 L15.2 10.6 Q15.2 11.4 14.4 11.4 L3.2 11.4 Q2.4 11.4 2.4 10.6 Z" fill="#2a2a2a"/><path d="M2.2 8.4 Q2.2 7.7 3 7.7 L13.6 7.7 Q14.4 7.7 14.4 8.4 L14.4 10 Q14.4 10.7 13.6 10.7 L3 10.7 Q2.2 10.7 2.2 10 Z" fill="#cfcfcf" stroke="#4a4a4a" stroke-width="0.6"/><rect x="4" y="8.8" width="1.2" height="1" fill="#e03030"/><rect x="5.4" y="8.8" width="0.9" height="1" fill="#30c030"/><rect x="7.4" y="8.9" width="4.6" height="0.8" fill="#e4e4e4"/></svg>
<svg style="position:absolute;left:172px;top:418.41px" width="17" height="12" viewBox="0 0 17 12"><rect x="3.3" y="0.2" width="11.2" height="7.5" rx="0.9" fill="#2a2a2a"/><rect x="3.2" y="0.1" width="10.3" height="6.6" rx="0.8" fill="#c8c8c8" stroke="#4a4a4a" stroke-width="0.6"/><rect x="3.8" y="0.6" width="9" height="5.6" rx="0.5" fill="#d6d6d6" stroke="#f2f2f2" stroke-width="0.4"/><rect x="5.1" y="1.8" width="6.1" height="3.8" fill="#111"/><rect x="6" y="2.6" width="4.3" height="2.1" fill="#f4f4f4"/><rect x="6" y="2.6" width="1.4" height="0.9" fill="#4cd8e8"/><path d="M2.4 8.6 Q2.4 7.9 3.2 7.9 L14.4 7.9 Q15.2 7.9 15.2 8.6 L15.2 10.6 Q15.2 11.4 14.4 11.4 L3.2 11.4 Q2.4 11.4 2.4 10.6 Z" fill="#2a2a2a"/><path d="M2.2 8.4 Q2.2 7.7 3 7.7 L13.6 7.7 Q14.4 7.7 14.4 8.4 L14.4 10 Q14.4 10.7 13.6 10.7 L3 10.7 Q2.2 10.7 2.2 10 Z" fill="#cfcfcf" stroke="#4a4a4a" stroke-width="0.6"/><rect x="4" y="8.8" width="1.2" height="1" fill="#e03030"/><rect x="5.4" y="8.8" width="0.9" height="1" fill="#30c030"/><rect x="7.4" y="8.9" width="4.6" height="0.8" fill="#e4e4e4"/></svg>
<svg style="position:absolute;left:172px;top:431.48px" width="17" height="12" viewBox="0 0 17 12"><rect x="3.3" y="0.2" width="11.2" height="7.5" rx="0.9" fill="#2a2a2a"/><rect x="3.2" y="0.1" width="10.3" height="6.6" rx="0.8" fill="#c8c8c8" stroke="#4a4a4a" stroke-width="0.6"/><rect x="3.8" y="0.6" width="9" height="5.6" rx="0.5" fill="#d6d6d6" stroke="#f2f2f2" stroke-width="0.4"/><rect x="5.1" y="1.8" width="6.1" height="3.8" fill="#111"/><rect x="6" y="2.6" width="4.3" height="2.1" fill="#f4f4f4"/><rect x="6" y="2.6" width="1.4" height="0.9" fill="#4cd8e8"/><path d="M2.4 8.6 Q2.4 7.9 3.2 7.9 L14.4 7.9 Q15.2 7.9 15.2 8.6 L15.2 10.6 Q15.2 11.4 14.4 11.4 L3.2 11.4 Q2.4 11.4 2.4 10.6 Z" fill="#2a2a2a"/><path d="M2.2 8.4 Q2.2 7.7 3 7.7 L13.6 7.7 Q14.4 7.7 14.4 8.4 L14.4 10 Q14.4 10.7 13.6 10.7 L3 10.7 Q2.2 10.7 2.2 10 Z" fill="#cfcfcf" stroke="#4a4a4a" stroke-width="0.6"/><rect x="4" y="8.8" width="1.2" height="1" fill="#e03030"/><rect x="5.4" y="8.8" width="0.9" height="1" fill="#30c030"/><rect x="7.4" y="8.9" width="4.6" height="0.8" fill="#e4e4e4"/></svg>
<svg style="position:absolute;left:172px;top:444.55px" width="17" height="12" viewBox="0 0 17 12"><rect x="3.3" y="0.2" width="11.2" height="7.5" rx="0.9" fill="#2a2a2a"/><rect x="3.2" y="0.1" width="10.3" height="6.6" rx="0.8" fill="#c8c8c8" stroke="#4a4a4a" stroke-width="0.6"/><rect x="3.8" y="0.6" width="9" height="5.6" rx="0.5" fill="#d6d6d6" stroke="#f2f2f2" stroke-width="0.4"/><rect x="5.1" y="1.8" width="6.1" height="3.8" fill="#111"/><rect x="6" y="2.6" width="4.3" height="2.1" fill="#f4f4f4"/><rect x="6" y="2.6" width="1.4" height="0.9" fill="#4cd8e8"/><path d="M2.4 8.6 Q2.4 7.9 3.2 7.9 L14.4 7.9 Q15.2 7.9 15.2 8.6 L15.2 10.6 Q15.2 11.4 14.4 11.4 L3.2 11.4 Q2.4 11.4 2.4 10.6 Z" fill="#2a2a2a"/><path d="M2.2 8.4 Q2.2 7.7 3 7.7 L13.6 7.7 Q14.4 7.7 14.4 8.4 L14.4 10 Q14.4 10.7 13.6 10.7 L3 10.7 Q2.2 10.7 2.2 10 Z" fill="#cfcfcf" stroke="#4a4a4a" stroke-width="0.6"/><rect x="4" y="8.8" width="1.2" height="1" fill="#e03030"/><rect x="5.4" y="8.8" width="0.9" height="1" fill="#30c030"/><rect x="7.4" y="8.9" width="4.6" height="0.8" fill="#e4e4e4"/></svg>
<svg style="position:absolute;left:172px;top:457.62px" width="17" height="12" viewBox="0 0 17 12"><rect x="3.3" y="0.2" width="11.2" height="7.5" rx="0.9" fill="#2a2a2a"/><rect x="3.2" y="0.1" width="10.3" height="6.6" rx="0.8" fill="#c8c8c8" stroke="#4a4a4a" stroke-width="0.6"/><rect x="3.8" y="0.6" width="9" height="5.6" rx="0.5" fill="#d6d6d6" stroke="#f2f2f2" stroke-width="0.4"/><rect x="5.1" y="1.8" width="6.1" height="3.8" fill="#111"/><rect x="6" y="2.6" width="4.3" height="2.1" fill="#f4f4f4"/><rect x="6" y="2.6" width="1.4" height="0.9" fill="#4cd8e8"/><path d="M2.4 8.6 Q2.4 7.9 3.2 7.9 L14.4 7.9 Q15.2 7.9 15.2 8.6 L15.2 10.6 Q15.2 11.4 14.4 11.4 L3.2 11.4 Q2.4 11.4 2.4 10.6 Z" fill="#2a2a2a"/><path d="M2.2 8.4 Q2.2 7.7 3 7.7 L13.6 7.7 Q14.4 7.7 14.4 8.4 L14.4 10 Q14.4 10.7 13.6 10.7 L3 10.7 Q2.2 10.7 2.2 10 Z" fill="#cfcfcf" stroke="#4a4a4a" stroke-width="0.6"/><rect x="4" y="8.8" width="1.2" height="1" fill="#e03030"/><rect x="5.4" y="8.8" width="0.9" height="1" fill="#30c030"/><rect x="7.4" y="8.9" width="4.6" height="0.8" fill="#e4e4e4"/></svg>
<svg style="position:absolute;left:172px;top:470.69px" width="17" height="12" viewBox="0 0 17 12"><rect x="3.3" y="0.2" width="11.2" height="7.5" rx="0.9" fill="#2a2a2a"/><rect x="3.2" y="0.1" width="10.3" height="6.6" rx="0.8" fill="#c8c8c8" stroke="#4a4a4a" stroke-width="0.6"/><rect x="3.8" y="0.6" width="9" height="5.6" rx="0.5" fill="#d6d6d6" stroke="#f2f2f2" stroke-width="0.4"/><rect x="5.1" y="1.8" width="6.1" height="3.8" fill="#111"/><rect x="6" y="2.6" width="4.3" height="2.1" fill="#f4f4f4"/><rect x="6" y="2.6" width="1.4" height="0.9" fill="#4cd8e8"/><path d="M2.4 8.6 Q2.4 7.9 3.2 7.9 L14.4 7.9 Q15.2 7.9 15.2 8.6 L15.2 10.6 Q15.2 11.4 14.4 11.4 L3.2 11.4 Q2.4 11.4 2.4 10.6 Z" fill="#2a2a2a"/><path d="M2.2 8.4 Q2.2 7.7 3 7.7 L13.6 7.7 Q14.4 7.7 14.4 8.4 L14.4 10 Q14.4 10.7 13.6 10.7 L3 10.7 Q2.2 10.7 2.2 10 Z" fill="#cfcfcf" stroke="#4a4a4a" stroke-width="0.6"/><rect x="4" y="8.8" width="1.2" height="1" fill="#e03030"/><rect x="5.4" y="8.8" width="0.9" height="1" fill="#30c030"/><rect x="7.4" y="8.9" width="4.6" height="0.8" fill="#e4e4e4"/></svg>
<svg style="position:absolute;left:172px;top:483.76px" width="17" height="12" viewBox="0 0 17 12"><rect x="3.3" y="0.2" width="11.2" height="7.5" rx="0.9" fill="#2a2a2a"/><rect x="3.2" y="0.1" width="10.3" height="6.6" rx="0.8" fill="#c8c8c8" stroke="#4a4a4a" stroke-width="0.6"/><rect x="3.8" y="0.6" width="9" height="5.6" rx="0.5" fill="#d6d6d6" stroke="#f2f2f2" stroke-width="0.4"/><rect x="5.1" y="1.8" width="6.1" height="3.8" fill="#111"/><rect x="6" y="2.6" width="4.3" height="2.1" fill="#f4f4f4"/><rect x="6" y="2.6" width="1.4" height="0.9" fill="#4cd8e8"/><path d="M2.4 8.6 Q2.4 7.9 3.2 7.9 L14.4 7.9 Q15.2 7.9 15.2 8.6 L15.2 10.6 Q15.2 11.4 14.4 11.4 L3.2 11.4 Q2.4 11.4 2.4 10.6 Z" fill="#2a2a2a"/><path d="M2.2 8.4 Q2.2 7.7 3 7.7 L13.6 7.7 Q14.4 7.7 14.4 8.4 L14.4 10 Q14.4 10.7 13.6 10.7 L3 10.7 Q2.2 10.7 2.2 10 Z" fill="#cfcfcf" stroke="#4a4a4a" stroke-width="0.6"/><rect x="4" y="8.8" width="1.2" height="1" fill="#e03030"/><rect x="5.4" y="8.8" width="0.9" height="1" fill="#30c030"/><rect x="7.4" y="8.9" width="4.6" height="0.8" fill="#e4e4e4"/></svg>
<svg style="position:absolute;left:172px;top:496.83px" width="17" height="12" viewBox="0 0 17 12"><rect x="3.3" y="0.2" width="11.2" height="7.5" rx="0.9" fill="#2a2a2a"/><rect x="3.2" y="0.1" width="10.3" height="6.6" rx="0.8" fill="#c8c8c8" stroke="#4a4a4a" stroke-width="0.6"/><rect x="3.8" y="0.6" width="9" height="5.6" rx="0.5" fill="#d6d6d6" stroke="#f2f2f2" stroke-width="0.4"/><rect x="5.1" y="1.8" width="6.1" height="3.8" fill="#111"/><rect x="6" y="2.6" width="4.3" height="2.1" fill="#f4f4f4"/><rect x="6" y="2.6" width="1.4" height="0.9" fill="#4cd8e8"/><path d="M2.4 8.6 Q2.4 7.9 3.2 7.9 L14.4 7.9 Q15.2 7.9 15.2 8.6 L15.2 10.6 Q15.2 11.4 14.4 11.4 L3.2 11.4 Q2.4 11.4 2.4 10.6 Z" fill="#2a2a2a"/><path d="M2.2 8.4 Q2.2 7.7 3 7.7 L13.6 7.7 Q14.4 7.7 14.4 8.4 L14.4 10 Q14.4 10.7 13.6 10.7 L3 10.7 Q2.2 10.7 2.2 10 Z" fill="#cfcfcf" stroke="#4a4a4a" stroke-width="0.6"/><rect x="4" y="8.8" width="1.2" height="1" fill="#e03030"/><rect x="5.4" y="8.8" width="0.9" height="1" fill="#30c030"/><rect x="7.4" y="8.9" width="4.6" height="0.8" fill="#e4e4e4"/></svg>
<svg style="position:absolute;left:172px;top:509.9px" width="17" height="12" viewBox="0 0 17 12"><rect x="0.3" y="2.4" width="2.6" height="4.2" rx="0.8" fill="#10e010"/><rect x="14.1" y="2.4" width="2.7" height="4.2" rx="0.8" fill="#10e010"/><rect x="3.3" y="0.2" width="11.2" height="7.5" rx="0.9" fill="#2a2a2a"/><rect x="3.2" y="0.1" width="10.3" height="6.6" rx="0.8" fill="#c8c8c8" stroke="#4a4a4a" stroke-width="0.6"/><rect x="3.8" y="0.6" width="9" height="5.6" rx="0.5" fill="#d6d6d6" stroke="#f2f2f2" stroke-width="0.4"/><rect x="5.1" y="1.8" width="6.1" height="3.8" fill="#0a8a0a"/><rect x="5.6" y="2.3" width="5.1" height="2.8" fill="#10e810"/><rect x="6" y="2.5" width="1.2" height="0.8" fill="#9fe"/><path d="M2.4 8.6 Q2.4 7.9 3.2 7.9 L14.4 7.9 Q15.2 7.9 15.2 8.6 L15.2 10.6 Q15.2 11.4 14.4 11.4 L3.2 11.4 Q2.4 11.4 2.4 10.6 Z" fill="#2a2a2a"/><path d="M2.2 8.4 Q2.2 7.7 3 7.7 L13.6 7.7 Q14.4 7.7 14.4 8.4 L14.4 10 Q14.4 10.7 13.6 10.7 L3 10.7 Q2.2 10.7 2.2 10 Z" fill="#cfcfcf" stroke="#4a4a4a" stroke-width="0.6"/><rect x="4" y="8.8" width="1.2" height="1" fill="#e03030"/><rect x="7.4" y="8.8" width="4.6" height="1" fill="#10e010"/></svg>
<svg style="position:absolute;left:172px;top:522.97px" width="17" height="12" viewBox="0 0 17 12"><rect x="3.3" y="0.2" width="11.2" height="7.5" rx="0.9" fill="#2a2a2a"/><rect x="3.2" y="0.1" width="10.3" height="6.6" rx="0.8" fill="#c8c8c8" stroke="#4a4a4a" stroke-width="0.6"/><rect x="3.8" y="0.6" width="9" height="5.6" rx="0.5" fill="#d6d6d6" stroke="#f2f2f2" stroke-width="0.4"/><rect x="5.1" y="1.8" width="6.1" height="3.8" fill="#111"/><rect x="6" y="2.6" width="4.3" height="2.1" fill="#f4f4f4"/><rect x="6" y="2.6" width="1.4" height="0.9" fill="#4cd8e8"/><path d="M2.4 8.6 Q2.4 7.9 3.2 7.9 L14.4 7.9 Q15.2 7.9 15.2 8.6 L15.2 10.6 Q15.2 11.4 14.4 11.4 L3.2 11.4 Q2.4 11.4 2.4 10.6 Z" fill="#2a2a2a"/><path d="M2.2 8.4 Q2.2 7.7 3 7.7 L13.6 7.7 Q14.4 7.7 14.4 8.4 L14.4 10 Q14.4 10.7 13.6 10.7 L3 10.7 Q2.2 10.7 2.2 10 Z" fill="#cfcfcf" stroke="#4a4a4a" stroke-width="0.6"/><rect x="4" y="8.8" width="1.2" height="1" fill="#e03030"/><rect x="5.4" y="8.8" width="0.9" height="1" fill="#30c030"/><rect x="7.4" y="8.9" width="4.6" height="0.8" fill="#e4e4e4"/></svg>
</body></html>
